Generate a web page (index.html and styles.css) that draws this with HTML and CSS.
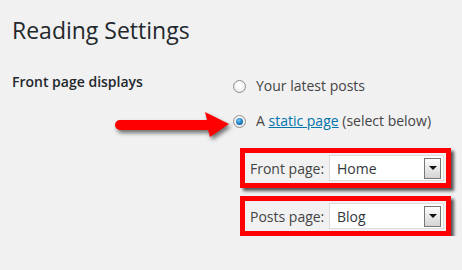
FILE: index.html
```html
<!DOCTYPE html>
<html lang="en">
<head>
    <meta charset="UTF-8">
    <title>Reading Settings</title>
    <link rel="stylesheet" href="styles.css">
</head>
<body>
    <div class="wrap">
        <h1>Reading Settings</h1>

        <div class="form-row">
            <div class="label-col">Front page displays</div>
            <div class="field-col">
                <label class="choice">
                    <span class="radio"></span>
                    Your latest posts
                </label>
                <label class="choice">
                    <span class="radio checked"></span>
                    A&nbsp;<a href="#">static page</a>&nbsp;(select below)
                </label>

                <div class="page-picks">
                    <div class="pick">
                        <span class="pick-label">Front page:</span>
                        <div class="select">
                            <span class="select-value">Home</span>
                            <span class="drop"></span>
                        </div>
                    </div>
                    <div class="pick">
                        <span class="pick-label">Posts page:</span>
                        <div class="select">
                            <span class="select-value">Blog</span>
                            <span class="drop"></span>
                        </div>
                    </div>
                </div>
            </div>
        </div>

        <!-- annotation arrow pointing at the static page option -->
        <svg class="pointer" width="126" height="40" viewBox="0 0 126 40">
            <path d="M10 16 H97 L95 8 L119 20 L100 33 L98 26 H10 A5 5 0 0 1 10 16 Z" fill="#f00"/>
        </svg>
    </div>
</body>
</html>
```

FILE: styles.css
```css
body {
    margin: 0;
    background: #f1f1f1;
    font-family: "Open Sans", sans-serif;
    color: #444;
}
.wrap {
    position: relative;
    padding: 16px 12px 0;
}
h1 {
    margin: 0;
    font-size: 23px;
    font-weight: 400;
    line-height: 29px;
    color: #23282d;
}
.form-row {
    display: flex;
    margin-top: 27px;
}
.label-col {
    width: 221px;
    flex: none;
    font-size: 14px;
    font-weight: 600;
    line-height: 20px;
    color: #23282d;
}
.field-col {
    padding-top: 4px;
}
.choice {
    display: flex;
    align-items: center;
    height: 20px;
    font-size: 14px;
    line-height: 20px;
}
.choice + .choice {
    margin-top: 15px;
}
.choice a {
    color: #0073aa;
    text-decoration: underline;
}
.radio {
    width: 13px;
    height: 13px;
    box-sizing: border-box;
    border-radius: 50%;
    border: 1px solid #8f8f8f;
    background: radial-gradient(circle at 50% 40%, #fff 25%, #dcdcdc 100%);
    margin-right: 10px;
    display: flex;
    align-items: center;
    justify-content: center;
}
.radio.checked::after {
    content: "";
    width: 7px;
    height: 7px;
    border-radius: 50%;
    background: radial-gradient(circle at 40% 35%, #7ccaf2 0%, #1e7fc4 50%, #0b4f86 100%);
}
.page-picks {
    margin-top: 17px;
    margin-left: 7px;
    display: flex;
    flex-direction: column;
    gap: 8px;
}
.pick {
    display: flex;
    align-items: center;
    box-sizing: border-box;
    width: 211px;
    border: 5px solid #f00;
    padding: 2px 2px 2px 5px;
    background: #f1f1f1;
    box-shadow: 3px 3px 3px rgba(0,0,0,0.65);
}
.pick-label {
    width: 79px;
    flex: none;
    font-size: 14px;
    color: #444;
}
.select {
    width: 115px;
    height: 26px;
    box-sizing: border-box;
    background: #fff;
    border: 1px solid #ddd;
    display: flex;
    align-items: center;
    justify-content: space-between;
    padding: 0 2px 0 7px;
    font-size: 14px;
    color: #32373c;
}
.drop {
    width: 17px;
    height: 21px;
    box-sizing: border-box;
    border: 1px solid #777;
    background: linear-gradient(#fdfdfd, #d4d4d4);
    display: flex;
    align-items: center;
    justify-content: center;
}
.drop::after {
    content: "";
    border-left: 4px solid transparent;
    border-right: 4px solid transparent;
    border-top: 4px solid #111;
}
.pointer {
    position: absolute;
    left: 110px;
    top: 104px;
    filter: drop-shadow(2px 3px 2px rgba(0,0,0,0.55));
}
```
